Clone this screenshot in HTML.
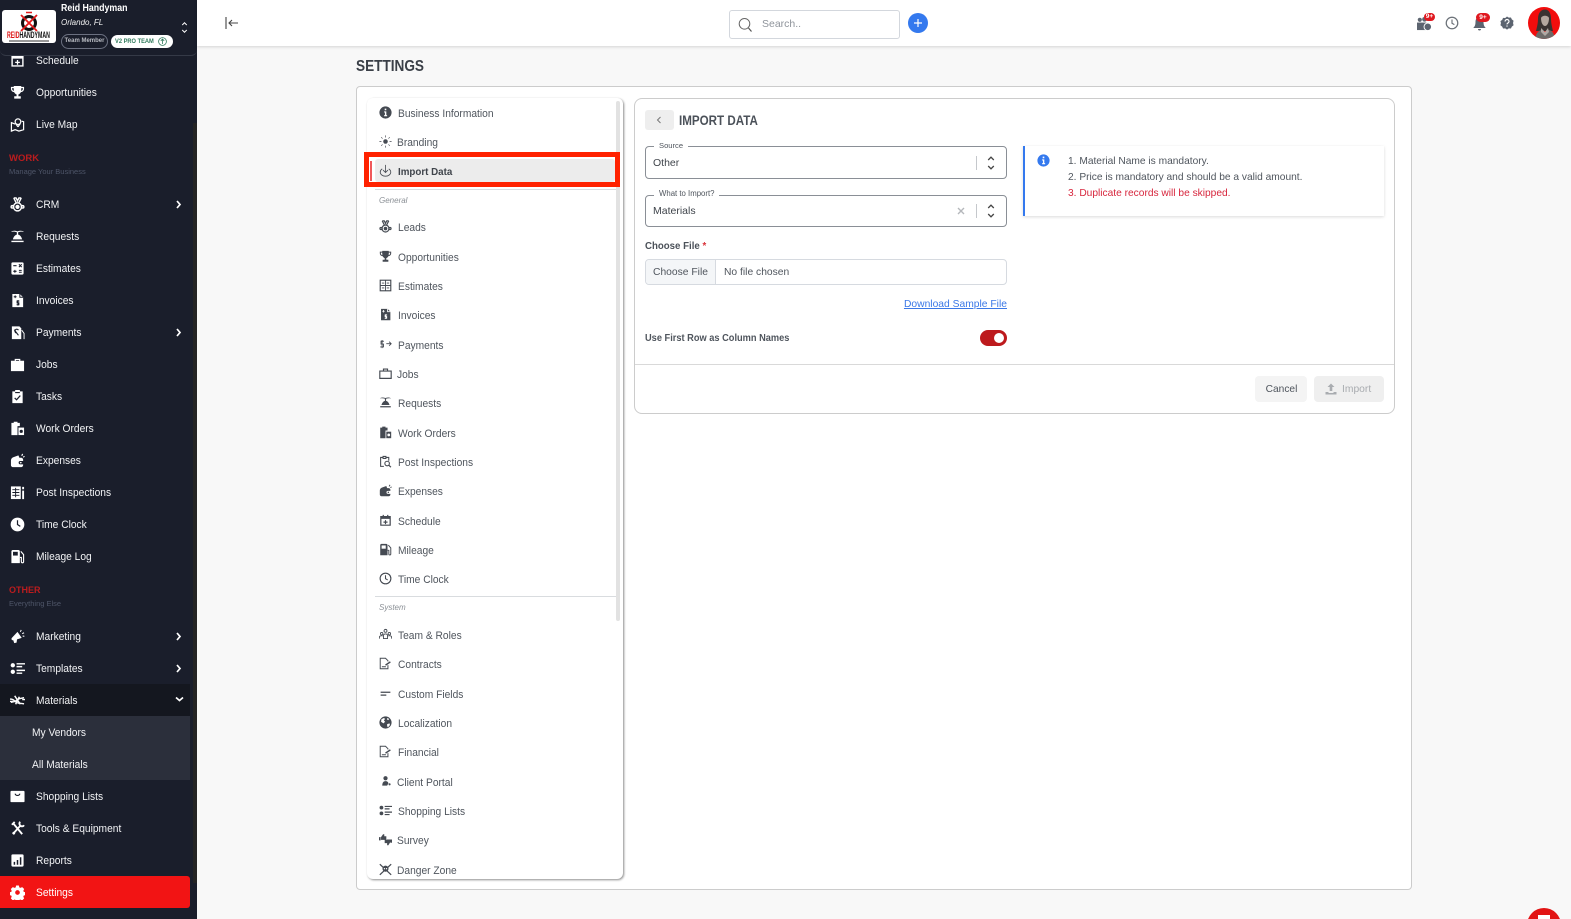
<!DOCTYPE html>
<html lang="en"><head><meta charset="utf-8"><title>Settings</title>
<style>
*{box-sizing:border-box}
html,body{margin:0;padding:0;width:1571px;height:919px;overflow:hidden;background:#f8f8f8;font-family:"Liberation Sans",sans-serif;color:#4b5159}
body{position:relative}
.a{position:absolute}
.n{transform-origin:left center;white-space:nowrap}
#side{position:absolute;left:0;top:0;width:197px;height:919px;background:#1a1e2b;overflow:hidden;--bgc:#1a1e2b;color:#fff}
.si{position:absolute;left:36px;height:16px;line-height:16px;font-size:11px;color:#f2f3f5;white-space:nowrap;transform-origin:left center;transform:translateY(1px) scaleX(.93)}
.ic{position:absolute;left:10px;width:15px;height:15px;color:#fff}
.ar{position:absolute;left:175px;width:7px;height:9px;fill:none;stroke:#fff;stroke-width:1.7}
.m{position:absolute;left:397px;height:16px;line-height:16px;font-size:11px;color:#4f555d;white-space:nowrap;transform-origin:left center;transform:translate(1px,1px) scaleX(.93)}
.mi{position:absolute;left:379px;width:13px;height:13px;color:#454a52;--bgc:#fff}
.sel{position:absolute;left:645px;width:362px;background:#fff;border:1px solid #8a8f96;border-radius:4px;font-size:10.5px;color:#3f444b}
.leg{position:absolute;background:#fff;padding:0 5px;font-size:7.6px;line-height:10px;color:#4f555d}
</style></head><body>
<svg width="0" height="0" style="position:absolute"><defs>
<symbol id="cal" viewBox="0 0 16 16"><path fill="currentColor" fill-rule="evenodd" d="M1.500 2.500h3V1h1.500v1.500h4V1h1.500v1.500h3v12h-13zM3 6v7h10V6z"/><path fill="currentColor" d="M7.300 7.500h1.400v1.800h1.800v1.400H8.700v1.800H7.300v-1.800H5.500V9.300h1.800z"/></symbol>
<symbol id="trophy" viewBox="0 0 16 16"><path fill="currentColor" d="M4 1h8v1h3v2c0 2-1.500 3.500-3.400 3.600C11 9 10 9.700 9 10v2h2.500v2.500h-7V12H7v-2C6 9.700 5 9 4.400 7.600 2.500 7.500 1 6 1 4V2h3zM2.300 3.300V4c0 1.200.7 2 1.800 2.300L3.900 3.300zM13.700 3.300h-1.600l-.2 3c1.100-.3 1.800-1.100 1.800-2.300z"/></symbol>
<symbol id="map" viewBox="0 0 16 16"><g fill="none" stroke="currentColor" stroke-width="1.300"><circle cx="8.500" cy="5" r="3"/><path d="M5.500 7.500 1.500 6v9l4-1.500 4 1.500 5-1.500V5l-2-.5M8.500 10.500 6 7M8.500 10.500 11 7"/></g></symbol>
<symbol id="medal" viewBox="0 0 16 16"><g fill="none" stroke="currentColor" stroke-width="1.500"><path d="M4 1l2.500 5M12 1 9.500 6M4 1h2.500L8 4l1.500-3H12"/><circle cx="8" cy="10.500" r="4.300"/><circle cx="8" cy="10.500" r="1.500" fill="currentColor"/><circle cx="2.500" cy="10.500" r="1.300"/><circle cx="13.500" cy="10.500" r="1.300"/></g></symbol>
<symbol id="req" viewBox="0 0 16 16"><path fill="currentColor" d="M1 3c2-1.500 4-1.500 7-.5 2.500-1 5-1 7 .5-2-.4-4-.4-6.300.4V6C10.500 6.300 12 8 13 11H3c1-3 2.500-4.700 4.300-5V3.400C5 2.600 3 2.600 1 3zM1.500 12.500h13V14h-13z"/></symbol>
<symbol id="calc" viewBox="0 0 16 16"><rect x="1.500" y="1.500" width="13" height="13" rx="1.300" fill="currentColor"/><path stroke="var(--bgc)" stroke-width="1.100" fill="none" d="M3.500 5h3.500M9.500 3.500l3 3M12.500 3.500l-3 3M3.500 11h3.500M5.200 9.500v3M9.500 10h3M9.500 12h3"/></symbol>
<symbol id="inv" viewBox="0 0 16 16"><path fill="currentColor" d="M2.500 1h8l3.500 3.500V15H2.500z"/><path stroke="var(--bgc)" stroke-width="1" fill="none" d="M4 4h3M5.500 2.500v3M10.500 1v3.500H14M10 8.500H7.500v2h2v2H7M8.500 7.500v6"/></symbol>
<symbol id="pay" viewBox="0 0 16 16"><path fill="currentColor" d="M2 1.500h8l2 2V15H2z"/><path stroke="var(--bgc)" stroke-width="1.200" fill="none" d="M4.500 5 9 11M9 5.500a2 2 0 1 0-2 3"/><path fill="none" stroke="currentColor" stroke-width="1" d="M12.500 5.500 15 9v6"/></symbol>
<symbol id="case" viewBox="0 0 16 16"><path fill="currentColor" d="M5 4V2h6v2h4v11H1V4zM6.300 4h3.400V3.200H6.300z"/></symbol>
<symbol id="caseo" viewBox="0 0 16 16"><path fill="none" stroke="currentColor" stroke-width="1.400" d="M1 5h14v9H1zM5.500 5V2.500h5V5"/></symbol>
<symbol id="task" viewBox="0 0 16 16"><path fill="currentColor" d="M2.500 2.500h3V1h5v1.500h3V15h-11z"/><path fill="none" stroke="var(--bgc)" stroke-width="1.300" d="M5 9.500l2 2 4-4.500M5.500 3.800h5"/></symbol>
<symbol id="wo" viewBox="0 0 16 16"><path fill="currentColor" d="M1.500 2h2.500V.8h4V2h2.500v3.500H8V15H1.500z"/><path fill="currentColor" d="M9 7h6v8H9z"/><circle cx="12" cy="11" r="1.700" fill="var(--bgc)"/></symbol>
<symbol id="post" viewBox="0 0 16 16"><path fill="none" stroke="currentColor" stroke-width="1.300" d="M6 14H2V3h2.500M9 3h3v4M5 1.800h3.500v2.400H5z"/><circle cx="10" cy="10.500" r="2.800" fill="none" stroke="currentColor" stroke-width="1.300"/><path stroke="currentColor" stroke-width="1.500" d="M12 12.500l2.700 2.500"/></symbol>
<symbol id="post2" viewBox="0 0 16 16"><path fill="currentColor" d="M1 1.500h10.500V15H1z"/><path fill="currentColor" d="M13 6h2v9h-2zM13 2h2v2.500h-2z"/><path stroke="var(--bgc)" stroke-width="1" fill="none" d="M2.500 5h7.500M2.500 8h7.500M2.500 11h7.500M6 3v10"/></symbol>
<symbol id="wal" viewBox="0 0 16 16"><path fill="currentColor" d="M1 8c0-1.500 1-3 2.500-3.500L9 2.500 10 5h2c1 0 2 1 2 2v1.500h-3a1.800 1.800 0 0 0 0 3.600h3V13c0 1-1 2-2 2H3c-1 0-2-1-2-2z"/><path stroke="currentColor" stroke-width="1.200" d="M12.500 3l1-2M14 4.500l1.500-1"/><circle cx="11.500" cy="10.300" r=".9" fill="currentColor"/></symbol>
<symbol id="clk" viewBox="0 0 16 16"><circle cx="8" cy="8" r="7.300" fill="currentColor"/><path fill="none" stroke="var(--bgc)" stroke-width="1.300" d="M8 3.500V8l3 2"/></symbol>
<symbol id="clko" viewBox="0 0 16 16"><circle cx="8" cy="8" r="6.600" fill="none" stroke="currentColor" stroke-width="1.400"/><path fill="none" stroke="currentColor" stroke-width="1.300" d="M8 4v4.300l2.700 1.500"/></symbol>
<symbol id="fuel" viewBox="0 0 16 16"><path fill="currentColor" d="M1.500 2.500c0-.8.700-1.500 1.500-1.500h6c.8 0 1.500.7 1.500 1.500V15h-9z"/><path fill="var(--bgc)" d="M3.200 3h5.100v4H3.200z"/><path fill="none" stroke="currentColor" stroke-width="1.200" d="M11.500 2.500 14.500 6v7.500a1.200 1.200 0 0 1-2.400 0V9h-1.500"/></symbol>
<symbol id="meg" viewBox="0 0 16 16"><path fill="currentColor" d="M2 9.500 8 3l4.500 6.500-5 1.500L7 14.500 4.500 15 3.500 12C1.800 12 1 10.800 2 9.500z"/><path stroke="currentColor" stroke-width="1.100" d="M11 3l1-2M13 5l2-1M13.500 7.500l1.800.3"/></symbol>
<symbol id="list" viewBox="0 0 16 16"><circle cx="3" cy="4.500" r="2.300" fill="currentColor"/><circle cx="3" cy="11.500" r="2.300" fill="currentColor"/><path stroke="currentColor" stroke-width="1.500" fill="none" d="M7 3h9M7 6h6M7 10h9M7 13h6"/></symbol>
<symbol id="mat" viewBox="0 0 16 16"><path fill="none" stroke="currentColor" stroke-width="1.500" d="M0 6.500c3 0 4 1 5.500 2.500S9 11 11 11l4 .5M1 10l4-1 5-3 5-1M5 3l6 9M10 4 6 12M0 9h3M13 7h3"/></symbol>
<symbol id="bag" viewBox="0 0 16 16"><rect x=".5" y="2" width="15" height="12" rx="1" fill="currentColor"/><path fill="none" stroke="var(--bgc)" stroke-width="1.300" d="M5.500 5c.5 2.500 4.500 2.500 5 0"/></symbol>
<symbol id="tool" viewBox="0 0 16 16"><path fill="none" stroke="currentColor" stroke-width="2" d="M3 14 11 5M5 14l-2-2M3 2l10 12M2 4l3-3M11 1c-1.500 1-1 3 0 4s3 1 4-.5"/></symbol>
<symbol id="chart" viewBox="0 0 16 16"><rect x="1.500" y="1.500" width="13" height="13" rx="1.300" fill="currentColor"/><path stroke="var(--bgc)" stroke-width="1.600" fill="none" d="M4.700 12.500v-3M8 12.500v-5M11.300 12.500v-8"/></symbol>
<symbol id="gear" viewBox="0 0 16 16"><path fill="currentColor" fill-rule="evenodd" d="M6.500.5h3l.4 2 1.200.6 1.900-.9 2.100 2.100-.9 1.900.5 1.200 2 .4v3l-2 .4-.5 1.200.9 1.900-2.100 2.100-1.900-.9-1.200.5-.4 2h-3l-.4-2-1.200-.5-1.900.9-2.100-2.100.9-1.900-.5-1.200-2-.4v-3l2-.4.5-1.200-.9-1.900 2.100-2.100 1.900.9 1.200-.6zM8 5.500a2.500 2.500 0 1 0 0 5 2.500 2.500 0 0 0 0-5z"/></symbol>
<symbol id="info" viewBox="0 0 16 16"><circle cx="8" cy="8" r="7.500" fill="currentColor"/><path fill="var(--bgc)" d="M7 3.300h2v2H7zM6.300 6.600h2.700v4.600h1v1.400H6.300v-1.400h1V8H6.300z"/></symbol>
<symbol id="sun" viewBox="0 0 16 16"><circle cx="8" cy="8" r="2.800" fill="currentColor"/><path stroke="currentColor" stroke-width=".8" d="M8 .5v2.500M8 13v2.500M.5 8H3M13 8h2.500M2.700 2.700l1.700 1.700M11.600 11.600l1.700 1.700M2.700 13.300l1.700-1.700M11.600 4.400l1.700-1.700"/></symbol>
<symbol id="dl" viewBox="0 0 16 16"><path fill="none" stroke="currentColor" stroke-width="1" d="M8 1v9M5 7.500 8 10.500l3-3M4 6C2.500 7 1.500 8.500 1.500 10a6.500 5 0 0 0 13 0c0-1.500-1-3-2.500-4"/></symbol>
<symbol id="dollar" viewBox="0 0 16 16"><path fill="none" stroke="currentColor" stroke-width="1.100" d="M6 4H2.500v3.500h3V11H1.500M3.800 2.500v10M9 7h6M12.500 4.500 15 7l-2.500 2.500"/></symbol>
<symbol id="calo" viewBox="0 0 16 16"><rect x="1.500" y="1.500" width="13" height="13" fill="none" stroke="currentColor" stroke-width="1.400"/><path stroke="currentColor" stroke-width="1.100" d="M1.500 8h13M8 1.500v13M3.500 5h3M9.500 5h3M3.500 11h3M9.500 11h3"/></symbol>
<symbol id="team" viewBox="0 0 16 16"><g fill="none" stroke="currentColor" stroke-width="1.100"><circle cx="8" cy="3.500" r="1.800"/><circle cx="3.300" cy="7" r="1.500"/><circle cx="12.700" cy="7" r="1.500"/><path d="M5.500 13V9.500c0-3 5-3 5 0V13zM.5 13v-2c0-1.500 3-2 4-1M15.500 13v-2c0-1.500-3-2-4-1"/></g></symbol>
<symbol id="con" viewBox="0 0 16 16"><path fill="none" stroke="currentColor" stroke-width="1.200" d="M11 10v4.500H1.500v-13H8l3 3v1M3.500 12h5"/><path stroke="currentColor" stroke-width="1.700" d="M8 10l6-4"/></symbol>
<symbol id="cf" viewBox="0 0 16 16"><path stroke="currentColor" stroke-width="1.500" d="M2 6.500h12M2 10h7"/></symbol>
<symbol id="globe" viewBox="0 0 16 16"><circle cx="8" cy="8" r="7.500" fill="currentColor"/><path fill="#fff" d="M3 4l3-1.500 1.500 1L6 5.500 7.500 7 5.500 9 2.500 7zM10 10l3-1 .5 2-2.500 3-1-1.500zM10 2.500l2.500 1-1 1.500-1.500-.5z"/></symbol>
<symbol id="user" viewBox="0 0 16 16"><circle cx="8" cy="4" r="2.600" fill="currentColor"/><path fill="currentColor" d="M4 13c0-3.500 1.500-5.500 4-5.500s3.500 1.500 3.500 3L10 13z"/><circle cx="13" cy="11.500" r="1.300" fill="currentColor"/></symbol>
<symbol id="thumb" viewBox="0 0 16 16"><path fill="currentColor" d="M0 5h2v4H0zM2.500 5 5 1.500h1.500V4H9v4.500H2.500zM7 8.500h2.500V8H16v4h-2v-1l-2.500 4H10v-2.500H7z"/></symbol>
<symbol id="skull" viewBox="0 0 16 16"><circle cx="8" cy="7" r="3.700" fill="currentColor"/><path stroke="currentColor" stroke-width="1.500" d="M1 1.500 15 14.500M15 1.500 1 14.500"/><circle cx="6.700" cy="7" r=".8" fill="#fff"/><circle cx="9.300" cy="7" r=".8" fill="#fff"/></symbol>
<symbol id="updown" viewBox="0 0 10 16"><path fill="none" stroke="currentColor" stroke-width="1.300" d="M2.200 5 5 2.200 7.800 5M2.200 11 5 13.800 7.800 11"/></symbol>
</defs></svg>

<!-- SIDEBAR -->
<div id="side">
<div class="a" style="left:193px;top:123px;width:4px;height:760px;background:#242424"></div>
<svg class="ic" style="top:53px"><use href="#cal"/></svg><div class="si" style="top:52px">Schedule</div>
<svg class="ic" style="top:85px"><use href="#trophy"/></svg><div class="si" style="top:84px">Opportunities</div>
<svg class="ic" style="top:117px"><use href="#map"/></svg><div class="si" style="top:116px">Live Map</div>
<div class="a" style="left:9px;top:153px;font-size:9.5px;line-height:12px;color:#bb1c1e;font-weight:bold">WORK</div>
<div class="a" style="left:9px;top:167px;font-size:7.5px;line-height:10px;color:#4e5568;white-space:nowrap">Manage Your Business</div>
<svg class="ic" style="top:197px"><use href="#medal"/></svg><div class="si" style="top:196px">CRM</div><svg class="ar" style="top:200px" viewBox="0 0 7 9"><path d="M2 1l3 3.500L2 8"/></svg>
<svg class="ic" style="top:229px"><use href="#req"/></svg><div class="si" style="top:228px">Requests</div>
<svg class="ic" style="top:261px"><use href="#calc"/></svg><div class="si" style="top:260px">Estimates</div>
<svg class="ic" style="top:293px"><use href="#inv"/></svg><div class="si" style="top:292px">Invoices</div>
<svg class="ic" style="top:325px"><use href="#pay"/></svg><div class="si" style="top:324px">Payments</div><svg class="ar" style="top:328px" viewBox="0 0 7 9"><path d="M2 1l3 3.500L2 8"/></svg>
<svg class="ic" style="top:357px"><use href="#case"/></svg><div class="si" style="top:356px">Jobs</div>
<svg class="ic" style="top:389px"><use href="#task"/></svg><div class="si" style="top:388px">Tasks</div>
<svg class="ic" style="top:421px"><use href="#wo"/></svg><div class="si" style="top:420px">Work Orders</div>
<svg class="ic" style="top:453px"><use href="#wal"/></svg><div class="si" style="top:452px">Expenses</div>
<svg class="ic" style="top:485px"><use href="#post2"/></svg><div class="si" style="top:484px">Post Inspections</div>
<svg class="ic" style="top:517px"><use href="#clk"/></svg><div class="si" style="top:516px">Time Clock</div>
<svg class="ic" style="top:549px"><use href="#fuel"/></svg><div class="si" style="top:548px">Mileage Log</div>
<div class="a" style="left:9px;top:584px;font-size:9px;line-height:12px;color:#bb1c1e;font-weight:bold">OTHER</div>
<div class="a" style="left:9px;top:599px;font-size:7.5px;line-height:10px;color:#4e5568;white-space:nowrap">Everything Else</div>
<svg class="ic" style="top:629px"><use href="#meg"/></svg><div class="si" style="top:628px">Marketing</div><svg class="ar" style="top:632px" viewBox="0 0 7 9"><path d="M2 1l3 3.500L2 8"/></svg>
<svg class="ic" style="top:661px"><use href="#list"/></svg><div class="si" style="top:660px">Templates</div><svg class="ar" style="top:664px" viewBox="0 0 7 9"><path d="M2 1l3 3.500L2 8"/></svg>
<div class="a" style="left:0;top:684px;width:190px;height:32px;background:#14171f"></div>
<svg class="ic" style="top:693px"><use href="#mat"/></svg><div class="si" style="top:692px">Materials</div><svg class="a" style="left:175px;top:696px;width:9px;height:7px;fill:none;stroke:#fff;stroke-width:1.7" viewBox="0 0 9 7"><path d="M1 1.500l3.500 3 3.500-3"/></svg>
<div class="a" style="left:0;top:716px;width:190px;height:64px;background:#2b2f3b"></div>
<div class="si" style="left:32px;top:724px">My Vendors</div>
<div class="si" style="left:32px;top:756px">All Materials</div>
<svg class="ic" style="top:789px"><use href="#bag"/></svg><div class="si" style="top:788px">Shopping Lists</div>
<svg class="ic" style="top:821px"><use href="#tool"/></svg><div class="si" style="top:820px">Tools &amp; Equipment</div>
<svg class="ic" style="top:853px"><use href="#chart"/></svg><div class="si" style="top:852px">Reports</div>
<div class="a" style="left:0;top:876px;width:190px;height:32px;background:#f21414;border-radius:0 3px 3px 0"></div>
<svg class="ic" style="top:885px"><use href="#gear"/></svg><div class="si" style="top:884px;color:#fff">Settings</div>

<div class="a" style="left:0;top:0;width:197px;height:56px;background:#1a1e2b;border-bottom:1px solid #353a47;border-radius:0 0 6px 6px"></div>
<div class="a" style="left:2px;top:10px;width:54px;height:33px;background:#fff;border-radius:3px;overflow:hidden">
<svg class="a" style="left:16px;top:1px" width="22" height="22" viewBox="0 0 22 22"><circle cx="11" cy="12" r="6.5" fill="none" stroke="#111" stroke-width="3"/><path stroke="#e21a1a" stroke-width="1.800" d="M3 4 19 20M19 4 3 20"/><path stroke="#e21a1a" stroke-width="1.500" d="M8 1.500h6"/></svg>
<div class="a n" style="left:5px;top:21px;font-size:9px;line-height:9px;font-weight:bold;color:#111;transform:scaleX(.58)"><span style="color:#d11">REID</span>HANDYMAN</div>
<div class="a" style="left:7px;top:30px;width:40px;height:2px;background:#999"></div>
</div>
<div class="a n" style="left:61px;top:3px;font-size:10px;line-height:12px;font-weight:bold;color:#fff;transform:scaleX(.88)">Reid Handyman</div>
<div class="a n" style="left:61px;top:17px;font-size:8px;line-height:11px;font-style:italic;color:#f0f0f0">Orlando, FL</div>
<div class="a" style="left:61px;top:34px;width:47px;height:15px;border:1px solid #6b7080;border-radius:8px;font-size:6px;line-height:13px;font-weight:bold;color:#b8bbc2;text-align:center;white-space:nowrap">Team Member</div>
<div class="a" style="left:111px;top:35px;width:62px;height:13px;background:#fff;border-radius:7px"></div>
<div class="a n" style="left:115px;top:35px;font-size:6.5px;line-height:13px;font-weight:bold;color:#2f7a5c;transform:scaleX(.88)">V2 PRO TEAM</div>
<svg class="a" style="left:158px;top:37px" width="9" height="9" viewBox="0 0 9 9"><circle cx="4.500" cy="4.500" r="3.900" fill="none" stroke="#2f7a5c" stroke-width=".8"/><path fill="none" stroke="#2f7a5c" stroke-width=".8" d="M4.500 7V2.200M2.800 3.800l1.700-1.700 1.700 1.700"/></svg>
<svg class="a" style="left:180px;top:21px;color:#fff" width="9" height="13"><use href="#updown"/></svg>
</div>

<!-- HEADER -->
<div class="a" style="left:197px;top:0;width:1374px;height:46px;background:#fff;box-shadow:0 1px 3px rgba(0,0,0,.15)"></div>
<svg class="a" style="left:225px;top:16px" width="14" height="14" viewBox="0 0 14 14"><path fill="none" stroke="#444" stroke-width="1.100" d="M1 1v12M13 7H4M7 4 4 7l3 3"/></svg>
<div class="a" style="left:729px;top:10px;width:171px;height:29px;background:#fff;border:1px solid #d3d7dd;border-radius:3px"></div>
<svg class="a" style="left:738px;top:17px" width="15" height="16" viewBox="0 0 15 16"><circle cx="6.500" cy="6.800" r="5.300" fill="none" stroke="#666" stroke-width="1"/><path stroke="#555" stroke-width="1.200" d="M10.500 11l3 3.500"/></svg>
<div class="a" style="left:762px;top:18px;font-size:10.5px;line-height:13px;color:#8f949b">Search..</div>
<div class="a" style="left:908px;top:13px;width:20px;height:20px;border-radius:50%;background:#3479ee"></div>
<svg class="a" style="left:908px;top:13px" width="20" height="20"><path stroke="#fff" stroke-width="1.200" d="M10 6v8M6 10h8"/></svg>

<svg class="a" style="left:1417px;top:16px;color:#5c6470;--bgc:#fff" width="15" height="15" viewBox="0 0 16 16"><circle cx="3" cy="4" r="2.200" fill="currentColor"/><circle cx="8" cy="3.500" r="2.500" fill="currentColor"/><path fill="currentColor" d="M0 7h10v8H0z"/><circle cx="11.500" cy="11.500" r="4" fill="currentColor" stroke="#fff"/></svg>
<div class="a" style="left:1424px;top:13px;width:11px;height:8px;border-radius:5px;background:#e0181f;color:#fff;font-size:6.5px;line-height:8px;font-weight:bold;text-align:center">9+</div>
<svg class="a" style="left:1445px;top:16px;color:#6b7178" width="14" height="14"><use href="#clko"/></svg>
<svg class="a" style="left:1473px;top:16px" width="13" height="15" viewBox="0 0 13 15"><path fill="#5c6470" d="M6.500 1C9.500 1 10.500 3.500 10.500 6c0 3 .8 4.500 2.200 6H.3C1.700 10.500 2.500 9 2.500 6c0-2.500 1-5 4-5zM5 13h3a1.500 1.500 0 0 1-3 0z"/></svg>
<div class="a" style="left:1476px;top:13px;width:14px;height:9px;border-radius:5px;background:#e0181f;color:#fff;font-size:6.5px;line-height:9px;font-weight:bold;text-align:center">9+</div>
<svg class="a" style="left:1500px;top:16px;--bgc:#fff" width="14" height="14" viewBox="0 0 16 16"><path fill="#5c6470" d="M8 .5l2 1.300 2.500-.1 1 2.200 2 1.500-.6 2.600.6 2.600-2 1.500-1 2.200-2.500-.1L8 15.500l-2-1.300-2.500.1-1-2.200-2-1.500.6-2.600L.5 5.900l2-1.500 1-2.200 2.500.1z"/><path fill="none" stroke="#fff" stroke-width="1.400" d="M5.800 6.300c0-3 4.500-3 4.500 0 0 1.800-2.300 1.700-2.300 3.300M8 10.800v1.400"/></svg>
<div class="a" style="left:1528px;top:7px;width:32px;height:32px;border-radius:50%;background:#f20d0d;overflow:hidden">
<svg width="32" height="32" viewBox="0 0 32 32"><path fill="#3a3331" d="M10 12c0-6 3-9.500 7-9.500s6 4 6 9.500c0 4 1 8 2 12H8c1-4 2-8 2-12z"/><path fill="#b5a89f" d="M13 11c1-3 7-3 8 0 0 5-2 8-4 8s-4-3-4-8z"/><path fill="#6d6a68" d="M7 32c1-6 4-9 7-9l3 2 3-2c4 0 6 3 7 9z"/><path fill="#b0a8a3" d="M13 21l4 4 3-4 1 4-4 4-4-4z"/></svg></div>

<!-- PAGE -->
<div class="a n" style="left:356px;top:58px;font-size:16px;line-height:18px;font-weight:bold;color:#3a3f47;transform:scaleX(.85)">SETTINGS</div>
<div class="a" style="left:356px;top:86px;width:1056px;height:804px;background:#fff;border:1px solid #ccc;border-radius:4px"></div>

<!-- Settings menu card -->
<div class="a" style="left:367px;top:98px;width:256px;height:781px;background:#fff;border-radius:6px;box-shadow:1px 1px 2px rgba(0,0,0,.45)"></div>
<div class="a" style="left:616px;top:101px;width:4px;height:520px;background:#e2e2e2;border-radius:2px"></div>

<svg class="mi" style="top:106px"><use href="#info"/></svg><div class="m" style="top:105px">Business Information</div>
<svg class="mi" style="top:135px"><use href="#sun"/></svg><div class="m" style="left:396px;top:134px">Branding</div>
<div class="a" style="left:375px;top:159px;width:240px;height:23px;background:#ececec;border-radius:3px"></div>
<div class="a" style="left:370px;top:161px;width:2px;height:20px;background:#f0585a"></div>
<svg class="mi" style="top:164px"><use href="#dl"/></svg><div class="m" style="top:163px;font-weight:bold;color:#3f444b;font-size:10.5px">Import Data</div>
<div class="a" style="left:364px;top:152px;width:256px;height:35px;border:5px solid #ff2200"></div>
<div class="a" style="left:375px;top:189px;width:241px;height:1px;background:#d9dcdf"></div>
<div class="a" style="left:379px;top:196px;font-size:8px;line-height:10px;font-style:italic;color:#8b9096">General</div>
<svg class="mi" style="top:220px"><use href="#medal"/></svg><div class="m" style="top:219px">Leads</div>
<svg class="mi" style="top:250px"><use href="#trophy"/></svg><div class="m" style="top:249px">Opportunities</div>
<svg class="mi" style="top:279px"><use href="#calo"/></svg><div class="m" style="top:278px">Estimates</div>
<svg class="mi" style="top:308px"><use href="#inv"/></svg><div class="m" style="top:307px">Invoices</div>
<svg class="mi" style="top:338px"><use href="#dollar"/></svg><div class="m" style="top:337px">Payments</div>
<svg class="mi" style="top:367px"><use href="#caseo"/></svg><div class="m" style="left:396px;top:366px">Jobs</div>
<svg class="mi" style="top:396px"><use href="#req"/></svg><div class="m" style="top:395px">Requests</div>
<svg class="mi" style="top:426px"><use href="#wo"/></svg><div class="m" style="top:425px">Work Orders</div>
<svg class="mi" style="top:455px"><use href="#post"/></svg><div class="m" style="top:454px">Post Inspections</div>
<svg class="mi" style="top:484px"><use href="#wal"/></svg><div class="m" style="top:483px">Expenses</div>
<svg class="mi" style="top:514px"><use href="#cal"/></svg><div class="m" style="top:513px">Schedule</div>
<svg class="mi" style="top:543px"><use href="#fuel"/></svg><div class="m" style="top:542px">Mileage</div>
<svg class="mi" style="top:572px"><use href="#clko"/></svg><div class="m" style="top:571px">Time Clock</div>
<div class="a" style="left:375px;top:596px;width:241px;height:1px;background:#d9dcdf"></div>
<div class="a" style="left:379px;top:603px;font-size:8px;line-height:10px;font-style:italic;color:#8b9096">System</div>
<svg class="mi" style="top:628px"><use href="#team"/></svg><div class="m" style="top:627px">Team &amp; Roles</div>
<svg class="mi" style="top:657px"><use href="#con"/></svg><div class="m" style="top:656px">Contracts</div>
<svg class="mi" style="top:687px"><use href="#cf"/></svg><div class="m" style="top:686px">Custom Fields</div>
<svg class="mi" style="top:716px"><use href="#globe"/></svg><div class="m" style="top:715px">Localization</div>
<svg class="mi" style="top:745px"><use href="#con"/></svg><div class="m" style="top:744px">Financial</div>
<svg class="mi" style="top:775px"><use href="#user"/></svg><div class="m" style="left:396px;top:774px">Client Portal</div>
<svg class="mi" style="top:804px"><use href="#list"/></svg><div class="m" style="top:803px">Shopping Lists</div>
<svg class="mi" style="top:833px"><use href="#thumb"/></svg><div class="m" style="left:396px;top:832px">Survey</div>
<svg class="mi" style="top:863px"><use href="#skull"/></svg><div class="m" style="left:396px;top:862px">Danger Zone</div>

<!-- Import card -->
<div class="a" style="left:634px;top:98px;width:761px;height:316px;background:#fff;border:1px solid #ccc;border-radius:8px"></div>
<div class="a" style="left:645px;top:110px;width:29px;height:20px;background:#eee;border-radius:3px"></div>
<svg class="a" style="left:656px;top:116px" width="6" height="8" viewBox="0 0 6 8"><path fill="none" stroke="#777" stroke-width="1" d="M4.500 1 1.500 4l3 3"/></svg>
<div class="a n" style="left:679px;top:113px;font-size:13.5px;line-height:16px;font-weight:bold;color:#4b5159;transform:scaleX(.86)">IMPORT DATA</div>

<div class="sel" style="top:146px;height:33px"><span class="a" style="left:7px;top:9px;line-height:14px">Other</span>
<div class="a" style="left:330px;top:9px;width:1px;height:14px;background:#c5c8cc"></div>
<svg class="a" style="left:340px;top:8px;color:#444" width="10" height="16"><use href="#updown"/></svg></div>
<div class="leg" style="left:654px;top:141px">Source</div>

<div class="sel" style="top:195px;height:32px"><span class="a" style="left:7px;top:8px;line-height:14px">Materials</span>
<svg class="a" style="left:311px;top:11px" width="8" height="8"><path stroke="#b5b8bc" stroke-width="1.400" d="M1 1l6 6M7 1 1 7"/></svg>
<div class="a" style="left:330px;top:8px;width:1px;height:14px;background:#c5c8cc"></div>
<svg class="a" style="left:340px;top:7px;color:#444" width="10" height="16"><use href="#updown"/></svg></div>
<div class="leg" style="left:654px;top:189px;white-space:nowrap;font-size:7.8px">What to Import?</div>

<div class="a n" style="left:645px;top:240px;font-size:10.5px;line-height:13px;font-weight:bold;color:#4b5159;transform:scaleX(.92)">Choose File <span style="color:#d9333a">*</span></div>
<div class="a" style="left:645px;top:259px;width:362px;height:26px;background:#fff;border:1px solid #d6dae0;border-radius:4px;font-size:10.3px;line-height:26px;color:#4f555d;overflow:hidden">
<div class="a" style="left:0;top:0;width:70px;height:24px;background:#f4f6f8;border-right:1px solid #d6dae0;text-align:center">Choose File</div>
<div class="a" style="left:78px;top:0;white-space:nowrap">No file chosen</div></div>
<div class="a" style="right:564px;top:298px;font-size:10.3px;line-height:13px;color:#3b78e7;text-decoration:underline;white-space:nowrap">Download Sample File</div>
<div class="a n" style="left:645px;top:332px;font-size:10px;line-height:13px;font-weight:bold;color:#4f555d;transform:scaleX(.925)">Use First Row as Column Names</div>
<div class="a" style="left:980px;top:330px;width:27px;height:16px;background:#bd1a1d;border-radius:8px"></div>
<div class="a" style="left:994px;top:333px;width:10px;height:10px;background:#fff;border-radius:50%"></div>
<div class="a" style="left:635px;top:364px;width:759px;height:1px;background:#d9d9d9"></div>
<div class="a" style="left:1255px;top:376px;width:52px;height:26px;background:#f4f4f4;border-radius:4px;font-size:10.2px;line-height:27px;text-align:center;color:#4f555d;padding-left:1px">Cancel</div>
<div class="a" style="left:1314px;top:376px;width:70px;height:26px;background:#efefef;border-radius:4px;font-size:10.3px;line-height:27px;color:#a9acb0;padding-left:28px">Import</div>
<svg class="a" style="left:1325px;top:383px" width="12" height="12" viewBox="0 0 12 12"><path fill="#a9acb0" d="M6 .5 9.500 4H7.300v4H4.700V4H2.500zM.5 9h3v1h5V9h3v2.500H.5z"/></svg>

<!-- Info box -->
<div class="a" style="left:1023px;top:146px;width:361px;height:70px;background:#fff;border-left:2px solid #3479ee;box-shadow:0 1px 3px rgba(0,0,0,.15)"></div>
<svg class="a" style="left:1037px;top:154px;color:#3479ee;--bgc:#fff" width="13" height="13"><use href="#info"/></svg>
<div class="a" style="left:1068px;top:154px;font-size:10.2px;line-height:16px;color:#4f555d;white-space:nowrap">1. Material Name is mandatory.<br>2. Price is mandatory and should be a valid amount.<br><span style="color:#d7263d">3. Duplicate records will be skipped.</span></div>

<div class="a" style="left:1527px;top:908px;width:34px;height:11px;overflow:hidden"><div style="width:34px;height:34px;border-radius:50%;background:#e21414"></div><div class="a" style="left:11px;top:7px;width:12px;height:4px;background:#fff"></div></div>
</body></html>
